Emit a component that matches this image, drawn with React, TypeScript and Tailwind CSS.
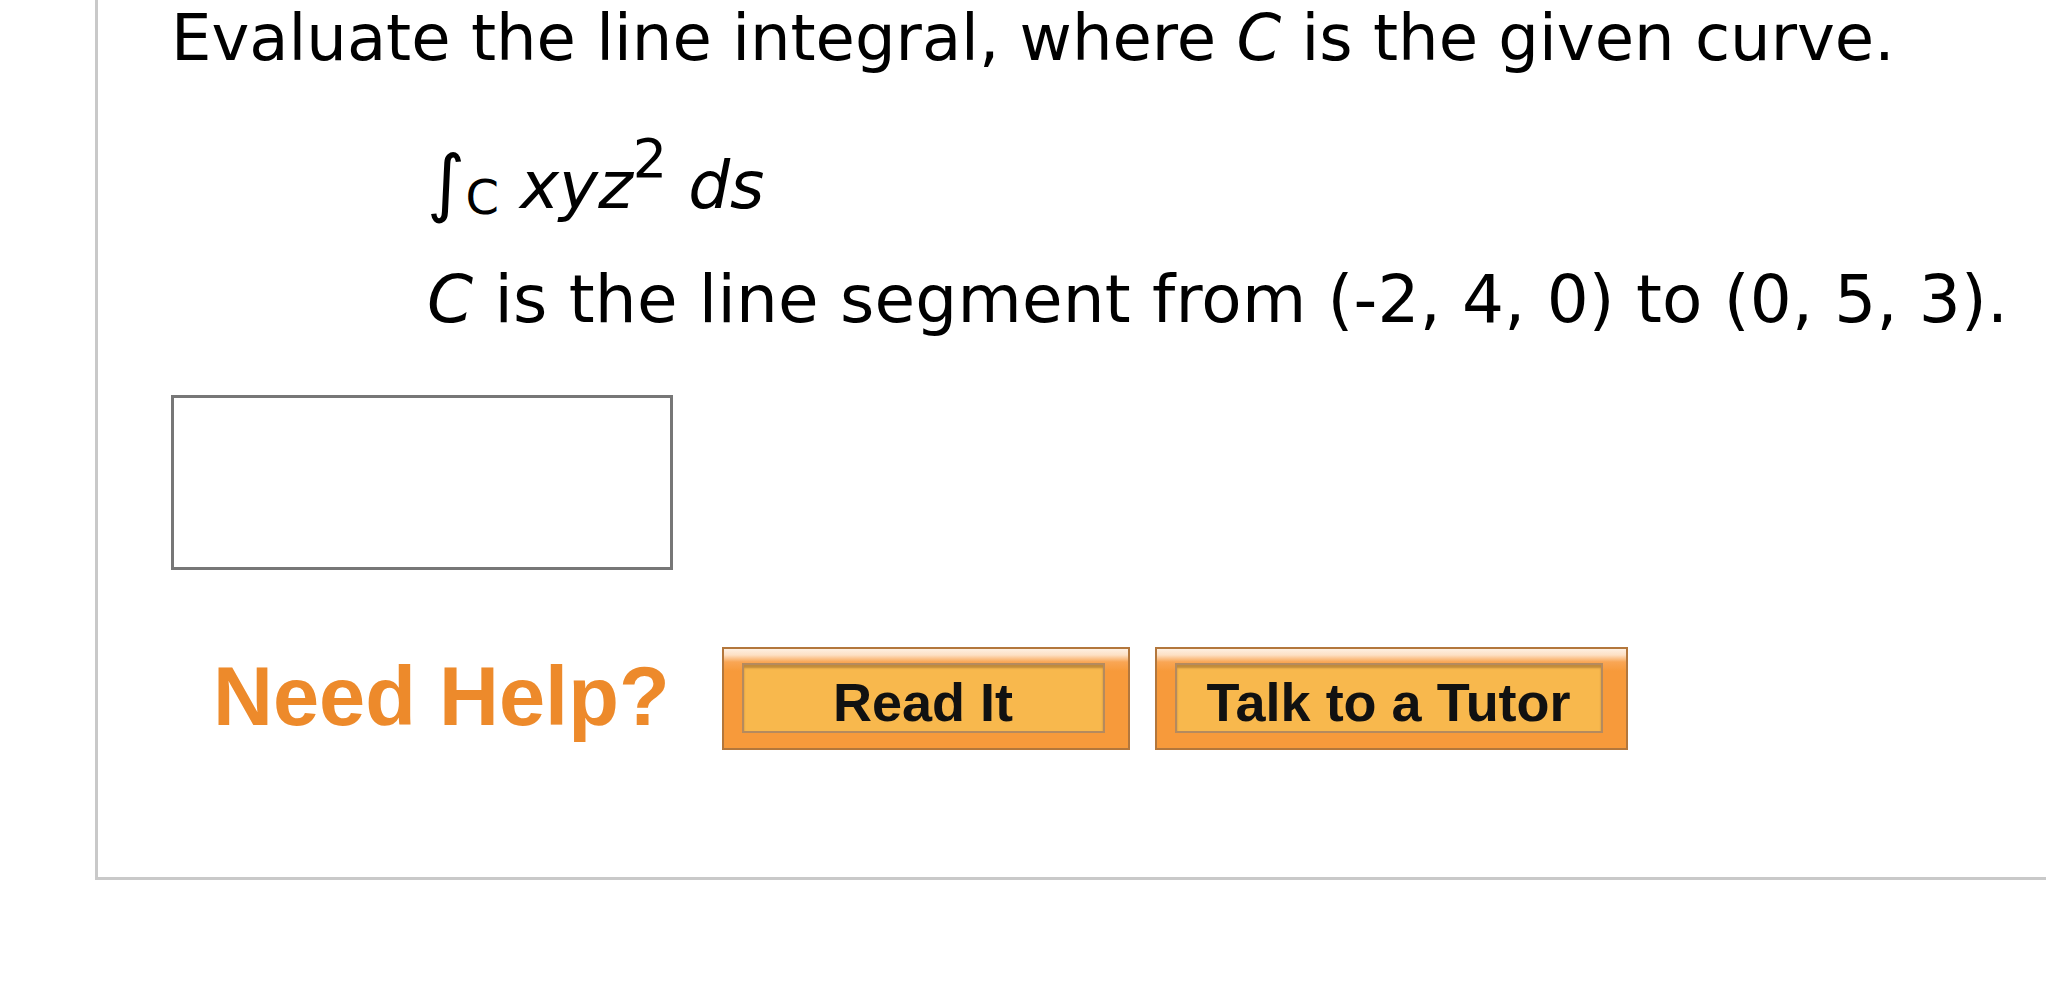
import React from 'react';

// ─── Help button (orange bevelled WebAssign-style) ────────────────────────────
const HelpButton: React.FC<{ label: string; width: string }> = ({ label, width }) => (
  <button
    type="button"
    className={`${width} h-[103px] border-2 border-[#b3773c] bg-[linear-gradient(to_bottom,#fef0e2_0px,#fde0c4_6px,#f9a655_13px,#f79a3b_22px,#f79a3b_100%)] pt-[14px] pr-[23px] pb-[15px] pl-[18px]`}
  >
    <div className="flex h-[70px] justify-center border-2 border-[#b58a5e] bg-[#f8b84d] pt-[10px] shadow-[inset_0_3px_2px_rgba(110,70,30,0.4)]">
      <span className="font-['Liberation_Sans',Arial,sans-serif] text-[54px] leading-[54px] font-bold text-[#111]">
        {label}
      </span>
    </div>
  </button>
);

export default function App() {
  return (
    <div className="h-[983px] w-full overflow-hidden bg-white font-['DejaVu_Sans',Verdana,sans-serif] text-black">
      <div className="ml-[95px] h-[880px] border-b-[3px] border-l-[3px] border-[#c9c9c9] pt-[7px] pl-[73px]">
        {/* Question text */}
        <p className="text-[64px] leading-[62px] whitespace-nowrap">
          Evaluate the line integral, where <i>C</i> is the given curve.
        </p>

        <div className="ml-[256px]">
          <p className="mt-[86px] text-[66px] leading-[62px] whitespace-nowrap">
            <span className="text-[74px] leading-[0]">∫</span>
            <span className="align-[-6px] text-[48px] leading-[0]">C</span>
            <i> xyz</i>
            <span className="align-[31px] text-[54px] leading-[0]">2</span>
            <i> ds</i>
          </p>
          <p className="mt-[52px] text-[66px] leading-[62px] tracking-[0.2px] whitespace-nowrap">
            <i>C</i> is the line segment from (-2, 4, 0) to (0, 5, 3).
          </p>
        </div>

        {/* Answer box */}
        <input
          type="text"
          aria-label="answer"
          className="mt-[64px] block h-[175px] w-[502px] border-[3px] border-[#777777] bg-white outline-none"
        />

        {/* Need help row */}
        <div className="mt-[77px] flex items-start">
          <span className="mt-[8px] ml-[42px] font-['Liberation_Sans',Arial,sans-serif] text-[83px] leading-[83px] font-bold text-[#ed8a2b]">
            Need Help?
          </span>
          <div className="ml-[52px] flex gap-[25px]">
            <HelpButton label="Read It" width="w-[408px]" />
            <HelpButton label="Talk to a Tutor" width="w-[473px]" />
          </div>
        </div>
      </div>
    </div>
  );
}
